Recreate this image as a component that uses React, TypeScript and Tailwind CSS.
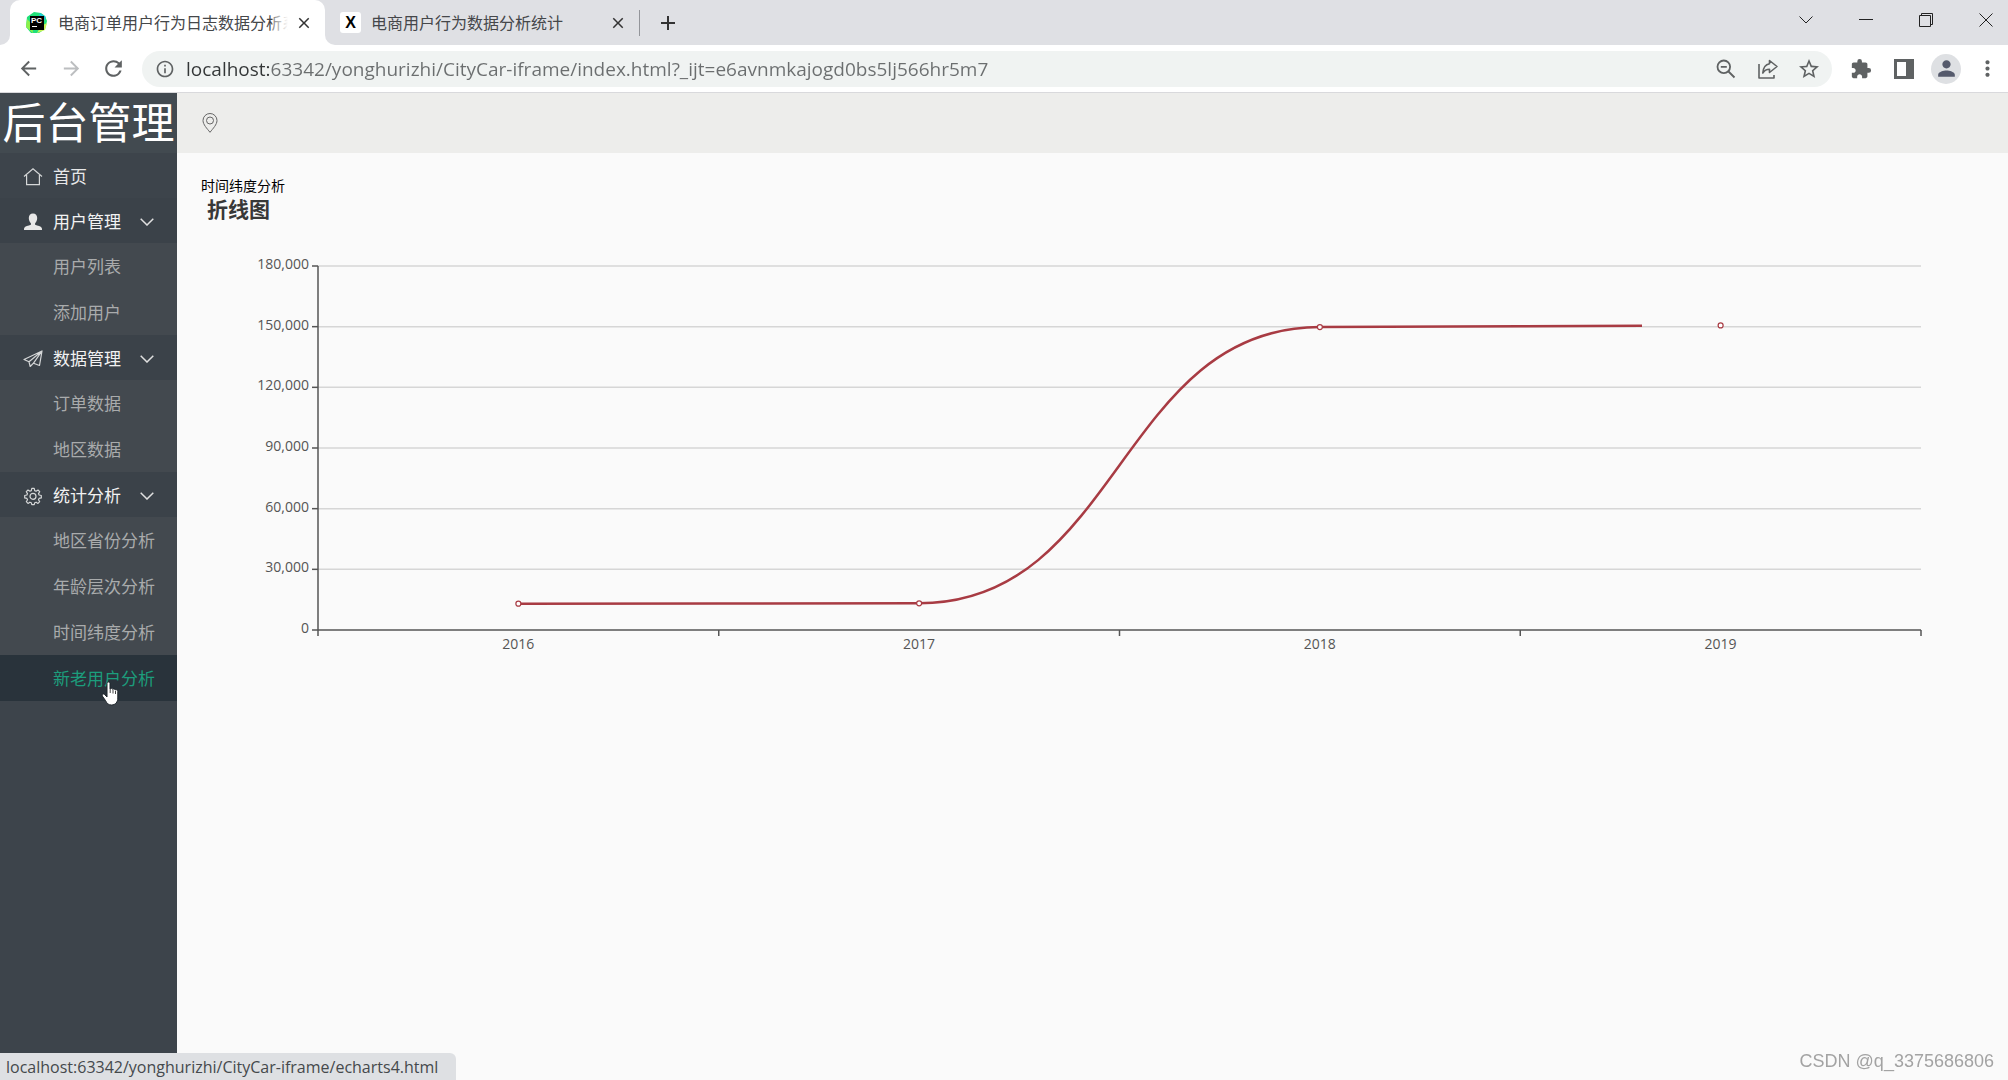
import { useState } from 'react'
import {
  MdAdd,
  MdArrowBack,
  MdArrowForward,
  MdClose,
  MdExtension,
  MdInfoOutline,
  MdMoreVert,
  MdPerson,
  MdRefresh,
  MdStarBorder
} from 'react-icons/md'

const URL_TEXT =
  'localhost:63342/yonghurizhi/CityCar-iframe/index.html?_ijt=e6avnmkajogd0bs5lj566hr5m7'

const menus = [
  { title: '用户管理', icon: 'user', children: ['用户列表', '添加用户'] },
  { title: '数据管理', icon: 'plane', children: ['订单数据', '地区数据'] },
  {
    title: '统计分析',
    icon: 'gear',
    children: ['地区省份分析', '年龄层次分析', '时间纬度分析', '新老用户分析']
  }
]

function MenuIcon({ name }: { name: string }) {
  if (name === 'home') {
    return (
      <svg viewBox="0 0 20 20" className="size-5" fill="none" stroke="#d5d7d8" strokeWidth="1.2">
        <path d="M1 9.5 L10 1.8 L19 9.5 M3.6 8 V17.6 H16.4 V8" />
      </svg>
    )
  }
  if (name === 'user') {
    return (
      <svg viewBox="0 0 20 20" className="size-5" fill="#e8e8e8">
        <path d="M10 1.5c2.7 0 4.2 1.9 4.2 4.6 0 2.1-.9 4.1-2.1 5.1v1.6c2.6.9 5.9 1.6 6.7 3.1.2.6.2 1.3.2 2H1c0-.7 0-1.4.2-2 .8-1.5 4.1-2.2 6.7-3.1v-1.6c-1.2-1-2.1-3-2.1-5.1 0-2.7 1.5-4.6 4.2-4.6z" />
      </svg>
    )
  }
  if (name === 'plane') {
    return (
      <svg viewBox="0 0 20 20" className="size-5" fill="none" stroke="#d5d7d8" strokeWidth="1.2" strokeLinejoin="round">
        <path d="M19 2 L1 10.5 L6 12.8 L19 2 L16.5 16.5 L10.5 14.2 L19 2 M6 12.8 L7.2 17.5 L10.5 14.2" />
      </svg>
    )
  }
  return (
    <svg viewBox="0 0 20 20" className="size-5" fill="none" stroke="#d5d7d8" strokeWidth="1.2" strokeLinejoin="round">
      <circle cx="10" cy="10.3" r="3" />
      <path d="M8.8 2.4h2.4l.5 2.2 1.4.6 1.9-1.2 1.7 1.7-1.2 1.9.6 1.4 2.2.5v2.4l-2.2.5-.6 1.4 1.2 1.9-1.7 1.7-1.9-1.2-1.4.6-.5 1.8H8.8l-.5-1.8-1.4-.6L5 17.400l-1.700-1.700 1.200-1.900-.6-1.400-2.200-.5V9.500l2.200-.5.6-1.400-1.200-1.900L5 4l1.900 1.200 1.400-.6z" />
    </svg>
  )
}

function PyCharmIcon() {
  return (
    <svg viewBox="0 0 22 22" className="size-[22px] shrink-0">
      <path d="M1 5 L8 0 L15 1 L19 4 L21 9 L19 17 L13 21 L5 21 L0 15 Z" fill="#21e07a" />
      <path d="M11 21 L19 18 L21 11 L15 14 Z" fill="#c8f55a" />
      <path d="M0 15 L1 7 L6 12 L7 21 Z" fill="#8df04a" />
      <path d="M14 1 L20 5 L18 9 L13 4 Z" fill="#1fc8d8" />
      <rect x="4" y="4" width="14" height="14" fill="#000" />
      <text x="5" y="11" fontSize="8" fontWeight="700" fill="#fff" fontFamily="Liberation Sans, sans-serif">PC</text>
      <rect x="6" y="14" width="5" height="1" fill="#fff" />
    </svg>
  )
}

function TabStrip() {
  return (
    <div className="flex h-[45px] bg-[#dfe0e4] text-[#45474a]">
      <div className="w-[10px] bg-white">
        <div className="h-full rounded-br-[10px] bg-[#dfe0e4]" />
      </div>
      <div className="flex w-[315px] items-center rounded-t-[10px] bg-white pr-[12px] pl-[16px]">
        <PyCharmIcon />
        <div className="relative ml-[10px] h-6 w-[230px] overflow-hidden text-base leading-6 whitespace-nowrap">
          电商订单用户行为日志数据分析系统
          <div className="absolute inset-y-0 right-0 w-4 bg-linear-to-r from-white/30 to-white" />
        </div>
        <button aria-label="关闭标签页" className="ml-[7px] text-[#333]">
          <MdClose size={18} />
        </button>
      </div>
      <div className="bg-white">
        <div className="flex h-full w-[314px] items-center rounded-bl-[10px] bg-[#dfe0e4] pr-[12px] pl-[15px]">
          <span className="flex size-[21px] items-center justify-center rounded-[3px] bg-white font-['Liberation_Sans',sans-serif] text-base font-bold text-black">X</span>
          <span className="ml-[10px] text-base leading-6 whitespace-nowrap">电商用户行为数据分析统计</span>
          <button aria-label="关闭标签页" className="ml-auto text-[#333]">
            <MdClose size={18} />
          </button>
        </div>
      </div>
      <div className="my-auto h-[26px] w-px bg-[#93959a]" />
      <button aria-label="新标签页" className="ml-[16px] text-[#333]">
        <MdAdd size={24} />
      </button>
      <div className="ml-auto flex h-10 text-[#222]">
        <button aria-label="搜索标签页" className="flex w-[60px] items-center justify-center">
          <svg viewBox="0 0 14 8" className="h-2 w-3.5" fill="none" stroke="currentColor"><path d="M.5.5 7 7 13.5.5" /></svg>
        </button>
        <button aria-label="最小化" className="flex w-[60px] items-center justify-center">
          <svg viewBox="0 0 14 14" className="size-3.5" fill="currentColor"><rect y="6" width="14" height="1" /></svg>
        </button>
        <button aria-label="还原" className="flex w-[60px] items-center justify-center">
          <svg viewBox="0 0 14 14" className="size-3.5" fill="none" stroke="currentColor"><path d="M.5 2.5h11v11H.5zM2.5 2.5v-2h11v11h-2" /></svg>
        </button>
        <button aria-label="关闭" className="flex w-[52px] items-center pl-[23px]">
          <svg viewBox="0 0 14 14" className="size-3.5" fill="none" stroke="currentColor"><path d="M.5.5l13 13M13.5.5l-13 13" /></svg>
        </button>
      </div>
    </div>
  )
}

function AddressBar() {
  return (
    <div className="flex h-12 items-center border-b border-[#d9d9dc] bg-white pr-[8px] pl-[17px] text-[#5f6263]">
      <button aria-label="后退"><MdArrowBack size={23} /></button>
      <button aria-label="前进" className="ml-[20px] text-[#bcbec0]"><MdArrowForward size={23} /></button>
      <button aria-label="重新加载" className="ml-[18px]"><MdRefresh size={25} /></button>
      <div className="ml-[16px] flex h-9 flex-1 items-center rounded-full bg-[#f0f3f2] pr-[11px] pl-[13px]">
        <MdInfoOutline size={20} />
        <input
          aria-label="地址"
          defaultValue={URL_TEXT}
          className="ml-[11px] min-w-0 flex-1 bg-linear-to-r from-[#333637] from-[84px] to-[#6b6e6f] to-[84px] bg-clip-text text-[19px] leading-6 text-transparent outline-none"
        />
        <button aria-label="缩放">
          <svg viewBox="0 0 20 20" className="size-5" fill="none" stroke="currentColor" strokeWidth="1.8">
            <circle cx="7.8" cy="7.8" r="6.3" />
            <path d="M4.8 7.8h6M12.500 12.500l6 6" />
          </svg>
        </button>
        <button aria-label="分享" className="ml-[21px]">
          <svg viewBox="0 0 22 22" className="size-[22px]" fill="none" stroke="currentColor" strokeWidth="1.6" strokeLinejoin="round">
            <path d="M2 6 V20 H17 V17 M12.5 2.5 L20 8.5 L12.5 14.5 V11.2 C9.5 11.2 7.5 12.2 5.8 15 C6.2 10 8.5 6.5 12.5 5.8 Z" />
          </svg>
        </button>
        <button aria-label="收藏" className="ml-[18px]"><MdStarBorder size={24} /></button>
      </div>
      <button aria-label="扩展程序" className="ml-[18px]"><MdExtension size={22} /></button>
      <button aria-label="侧边栏" className="ml-[22px]">
        <svg viewBox="0 0 20 20" className="size-5" fill="currentColor"><path d="M0 0h20v20H0zM3 3v14h9V3z" fillRule="evenodd" /></svg>
      </button>
      <button aria-label="个人资料" className="ml-[17px] flex size-[30px] items-center justify-center rounded-full bg-[#dee0e3] text-[#555a6c]">
        <MdPerson size={25} />
      </button>
      <button aria-label="更多" className="ml-[14px]"><MdMoreVert size={25} /></button>
    </div>
  )
}

function HandCursor() {
  return (
    <svg viewBox="0 0 20 26" className="pointer-events-none absolute top-[26px] left-[101px] h-[26px] w-5">
      <path
        d="M6 2.5c0-2 3-2 3 0V8c.6-1 2.5-.8 2.7.4.7-.8 2.3-.6 2.6.6.9-.6 2.5-.1 2.5 1.5V17c0 4-2.3 7-6.3 7-3.5 0-4.8-2-6-4.5L1.3 15c-.8-1.7 1-2.8 2.3-1.5L6 16z"
        fill="#fff"
        stroke="#1f262c"
      />
      <path d="M9.2 8v4M12 9v3.5M14.5 10v3" stroke="#444" fill="none" />
    </svg>
  )
}

function Sidebar() {
  const [closed, setClosed] = useState<string[]>([])

  const toggle = (title: string) => {
    setClosed(closed.includes(title) ? closed.filter(t => t !== title) : [...closed, title])
  }

  return (
    <aside className="w-[177px] shrink-0 bg-[#3d444b] text-[17px]">
      <h1 className="flex h-[60px] items-center justify-center bg-[#424a50] text-[43px] leading-[48px] whitespace-nowrap text-white">
        后台管理
      </h1>
      <nav>
        <a href="#home" className="flex h-[45px] items-center pt-[2px] pl-[23px] text-[#e6e7e8]">
          <MenuIcon name="home" />
          <span className="ml-[10px]">首页</span>
        </a>
        {menus.map(menu => (
          <div key={menu.title}>
            <button
              onClick={() => toggle(menu.title)}
              className="flex h-[45px] w-full items-center bg-[#3b4249] pt-[2px] pr-[23px] pl-[23px] text-[#f2f2f2]"
            >
              <MenuIcon name={menu.icon} />
              <span className="ml-[10px]">{menu.title}</span>
              <svg viewBox="0 0 14 8" className="ml-auto h-2 w-3.5" fill="none" stroke="#e0e0e0" strokeWidth="1.5">
                <path d="M.7.7 7 7 13.3.7" />
              </svg>
            </button>
            {!closed.includes(menu.title) && (
              <ul className="bg-[#43494f]">
                {menu.children.map(item => {
                  const active = item === '新老用户分析'
                  return (
                    <li key={item} className="relative">
                      <a
                        href="#page"
                        className={`flex h-[46px] items-center pt-[2px] pl-[53px] ${active ? 'bg-[#29333b] text-[#1c9d7c]' : 'text-[#a9abac]'}`}
                      >
                        {item}
                      </a>
                      {active && <HandCursor />}
                    </li>
                  )
                })}
              </ul>
            )}
          </div>
        ))}
      </nav>
    </aside>
  )
}

// plot area inside the 1783 x 460 view box
const LEFT = 117
const RIGHT = 1720
const TOP = 71
const BOTTOM = 435
const MAX = 180000

const points = [
  { year: '2016', value: 13000 },
  { year: '2017', value: 13200 },
  { year: '2018', value: 149800 },
  { year: '2019', value: 150600 }
]

const band = (RIGHT - LEFT) / points.length
const xOf = (i: number) => LEFT + band * (i + 0.5)
const yOf = (v: number) => BOTTOM - (v / MAX) * (BOTTOM - TOP)

function LineChart() {
  const ticks = [0, 30000, 60000, 90000, 120000, 150000, 180000]

  let path = `M${xOf(0)} ${yOf(points[0].value)}`
  for (let i = 1; i < points.length; i++) {
    const mid = (xOf(i - 1) + xOf(i)) / 2
    path += ` C${mid} ${yOf(points[i - 1].value)} ${mid} ${yOf(points[i].value)} ${xOf(i)} ${yOf(points[i].value)}`
  }

  return (
    <svg viewBox="0 0 1783 460" className="block h-auto w-full font-['Open_Sans','Noto_Sans_CJK_SC',sans-serif] text-sm">
      <defs>
        {/* the line is still being drawn in, it has not reached 2019 yet */}
        <clipPath id="reveal">
          <rect x="0" y="0" width="1441" height="460" />
        </clipPath>
      </defs>
      <text x="6" y="22" fontSize="21" fontWeight="700" fill="#383838">折线图</text>
      {ticks.map(t => (
        <g key={t}>
          {t > 0 && <line x1={LEFT} x2={RIGHT} y1={yOf(t)} y2={yOf(t)} stroke="#d6d6d6" strokeWidth="1.5" />}
          <line x1={LEFT - 6} x2={LEFT} y1={yOf(t)} y2={yOf(t)} stroke="#555" strokeWidth="1.5" />
          <text x={LEFT - 9} y={yOf(t) + 3} textAnchor="end" fill="#555">{t.toLocaleString('en-US')}</text>
        </g>
      ))}
      <line x1={LEFT} x2={LEFT} y1={TOP} y2={BOTTOM} stroke="#555" strokeWidth="1.5" />
      <line x1={LEFT} x2={RIGHT} y1={BOTTOM} y2={BOTTOM} stroke="#555" strokeWidth="1.5" />
      {[0, 1, 2, 3, 4].map(i => (
        <line key={i} x1={LEFT + band * i} x2={LEFT + band * i} y1={BOTTOM} y2={BOTTOM + 6} stroke="#555" strokeWidth="1.5" />
      ))}
      <path d={path} fill="none" stroke="#a83b43" strokeWidth="2.5" clipPath="url(#reveal)" />
      {points.map((p, i) => (
        <g key={p.year}>
          <circle cx={xOf(i)} cy={yOf(p.value)} r="2.5" fill="#fff" stroke="#a83b43" strokeWidth="1.2" />
          <text x={xOf(i)} y={BOTTOM + 19} textAnchor="middle" fill="#555">{p.year}</text>
        </g>
      ))}
    </svg>
  )
}

export default function App() {
  return (
    <div className="flex min-h-screen flex-col bg-[#fafafa] font-['Open_Sans','Noto_Sans_CJK_SC',sans-serif]">
      <TabStrip />
      <AddressBar />

      <div className="flex flex-1">
        <Sidebar />
        <div className="min-w-0 flex-1">
          <header className="flex h-[60px] items-center bg-[#ededeb] pl-[25px]">
            <svg viewBox="0 0 16 20" className="h-5 w-4" fill="none" stroke="#666">
              <path d="M8 19.3C5 15.5 1 11.5 1 7.5a7 7 0 0 1 14 0c0 4-4 8-7 11.8z" />
              <circle cx="8" cy="7.5" r="3.5" />
            </svg>
          </header>
          <main className="px-6 pt-6">
            <p className="text-sm leading-[18px] text-black">时间纬度分析</p>
            <LineChart />
          </main>
        </div>
      </div>

      {/* link preview + watermark */}
      <div className="fixed bottom-0 left-0 h-[27px] rounded-tr-[6px] bg-[#dee0e3] pr-[18px] pl-[6px] text-base leading-7 text-[#45494c]">
        localhost:63342/yonghurizhi/CityCar-iframe/echarts4.html
      </div>
      <div className="fixed right-[14px] bottom-[7px] font-['Liberation_Sans',sans-serif] text-lg leading-6 text-[#a3a3a3]">
        CSDN @q_3375686806
      </div>
    </div>
  )
}
